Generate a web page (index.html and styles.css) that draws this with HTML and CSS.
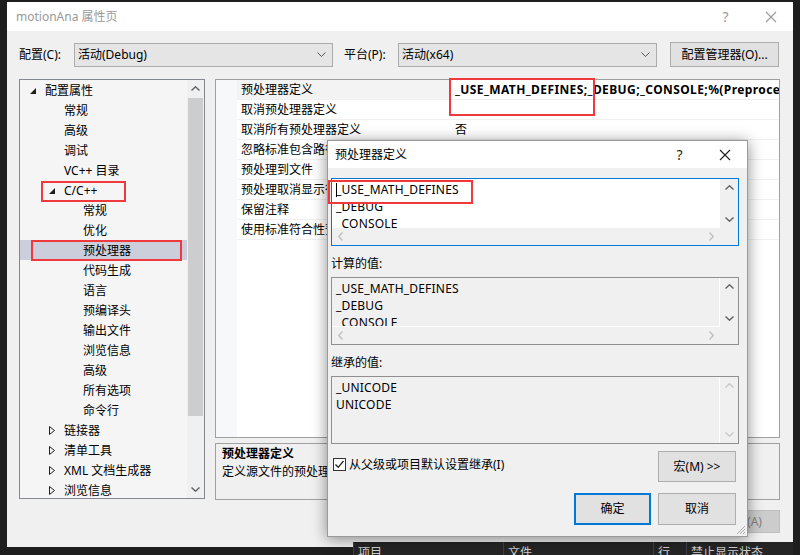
FILE: index.html
```html
<!DOCTYPE html>
<html lang="zh-CN">
  <head>
    <meta charset="UTF-8" />
    <title>motionAna 属性页</title>
    <link rel="stylesheet" href="styles.css">
  </head>
  <body>
    <div class="desk">
      <!-- 主窗口：属性页 -->
      <section class="win main">
        <div class="titlebar">
          <span class="title">motionAna 属性页</span>
          <span class="tb-btn q">?</span>
          <span class="tb-btn">
            <svg width="12" height="12" viewBox="0 0 12 12"><path d="M1 1L11 11M11 1L1 11" stroke="#9a9a9a" stroke-width="1.1"/></svg>
          </span>
        </div>
        <div class="main-body">
          <div class="cfg-row">
            <label class="lbl lbl-cfg">配置(C):</label>
            <div class="select">
              <span>活动(Debug)</span>
              <svg width="9" height="5" viewBox="0 0 9 5"><polyline points="0.5,0.5 4.5,4.5 8.5,0.5" fill="none" stroke="#555"/></svg>
            </div>
            <label class="lbl lbl-plat">平台(P):</label>
            <div class="select">
              <span>活动(x64)</span>
              <svg width="9" height="5" viewBox="0 0 9 5"><polyline points="0.5,0.5 4.5,4.5 8.5,0.5" fill="none" stroke="#555"/></svg>
            </div>
            <button class="btn btn-mgr">配置管理器(O)...</button>
          </div>

          <div class="panes">
            <div class="tree">
              <div class="tree-list">
                <div class="node lv0"><span class="arr"><svg width="6" height="6"><polygon points="6,0 6,6 0,6" fill="#1e1e1e"/></svg></span>配置属性</div>
                <div class="node lv1"><span class="arr"></span>常规</div>
                <div class="node lv1"><span class="arr"></span>高级</div>
                <div class="node lv1"><span class="arr"></span>调试</div>
                <div class="node lv1"><span class="arr"></span>VC++ 目录</div>
                <div class="node lv1 exp"><span class="arr"><svg width="6" height="6"><polygon points="6,0 6,6 0,6" fill="#1e1e1e"/></svg></span>C/C++</div>
                <div class="node lv2"><span class="arr"></span>常规</div>
                <div class="node lv2"><span class="arr"></span>优化</div>
                <div class="node lv2 sel"><span class="arr"></span>预处理器</div>
                <div class="node lv2"><span class="arr"></span>代码生成</div>
                <div class="node lv2"><span class="arr"></span>语言</div>
                <div class="node lv2"><span class="arr"></span>预编译头</div>
                <div class="node lv2"><span class="arr"></span>输出文件</div>
                <div class="node lv2"><span class="arr"></span>浏览信息</div>
                <div class="node lv2"><span class="arr"></span>高级</div>
                <div class="node lv2"><span class="arr"></span>所有选项</div>
                <div class="node lv2"><span class="arr"></span>命令行</div>
                <div class="node lv1"><span class="arr"><svg width="6" height="9"><polygon points="0.5,0.5 5.5,4.5 0.5,8.5" fill="none" stroke="#1e1e1e"/></svg></span>链接器</div>
                <div class="node lv1"><span class="arr"><svg width="6" height="9"><polygon points="0.5,0.5 5.5,4.5 0.5,8.5" fill="none" stroke="#1e1e1e"/></svg></span>清单工具</div>
                <div class="node lv1"><span class="arr"><svg width="6" height="9"><polygon points="0.5,0.5 5.5,4.5 0.5,8.5" fill="none" stroke="#1e1e1e"/></svg></span>XML 文档生成器</div>
                <div class="node lv1"><span class="arr"><svg width="6" height="9"><polygon points="0.5,0.5 5.5,4.5 0.5,8.5" fill="none" stroke="#1e1e1e"/></svg></span>浏览信息</div>
              </div>
              <div class="vscroll tree-scroll">
                <span class="sb-cell"><svg width="9" height="5"><polyline points="0.5,4.5 4.5,0.8 8.5,4.5" fill="none" stroke="#606060" stroke-width="1.4"/></svg></span>
                <span class="thumb"></span>
                <span class="sb-fill"></span>
                <span class="sb-cell"><svg width="9" height="5"><polyline points="0.5,0.5 4.5,4.2 8.5,0.5" fill="none" stroke="#606060" stroke-width="1.4"/></svg></span>
              </div>
            </div>

            <div class="right">
              <div class="grid">
                <div class="gutter"></div>
                <div class="props">
                  <div class="prop cur"><span class="pname">预处理器定义</span><span class="pval bold">_USE_MATH_DEFINES;_DEBUG;_CONSOLE;%(PreprocessorDefinitions)</span></div>
                  <div class="prop"><span class="pname">取消预处理器定义</span><span class="pval"></span></div>
                  <div class="prop"><span class="pname">取消所有预处理器定义</span><span class="pval">否</span></div>
                  <div class="prop"><span class="pname">忽略标准包含路径</span><span class="pval">否</span></div>
                  <div class="prop"><span class="pname">预处理到文件</span><span class="pval">否</span></div>
                  <div class="prop"><span class="pname">预处理取消显示行号</span><span class="pval">否</span></div>
                  <div class="prop"><span class="pname">保留注释</span><span class="pval">否</span></div>
                  <div class="prop"><span class="pname">使用标准符合性预处理器</span><span class="pval"></span></div>
                </div>
              </div>
              <div class="desc">
                <div class="bold">预处理器定义</div>
                <div>定义源文件的预处理器符号。</div>
              </div>
            </div>
          </div>

          <div class="foot">
            <button class="btn">确定</button>
            <button class="btn">取消</button>
            <button class="btn off">应用(A)</button>
          </div>
        </div>
      </section>

      <div class="status">
        <span class="col c1">项目</span>
        <span class="col c2">文件</span>
        <span class="col c3">行</span>
        <span class="col c4">禁止显示状态</span>
      </div>

      <!-- 子对话框：预处理器定义 -->
      <section class="win dlg">
        <div class="titlebar">
          <span class="title">预处理器定义</span>
          <span class="tb-btn q">?</span>
          <span class="tb-btn">
            <svg width="12" height="12" viewBox="0 0 12 12"><path d="M1 1L11 11M11 1L1 11" stroke="#1e1e1e" stroke-width="1.1"/></svg>
          </span>
        </div>
        <div class="dlg-body">
          <div class="box focus">
            <div class="text white">
              <div><span class="caret"></span>_USE_MATH_DEFINES</div>
              <div>_DEBUG</div>
              <div>_CONSOLE</div>
            </div>
            <div class="vscroll">
              <span class="sb-cell"><svg width="9" height="5"><polyline points="0.5,4.5 4.5,0.8 8.5,4.5" fill="none" stroke="#606060" stroke-width="1.4"/></svg></span>
              <span class="sb-fill"></span>
              <span class="sb-cell"><svg width="9" height="5"><polyline points="0.5,0.5 4.5,4.2 8.5,0.5" fill="none" stroke="#606060" stroke-width="1.4"/></svg></span>
            </div>
            <div class="hscroll">
              <span class="sb-cell"><svg width="5" height="9"><polyline points="4.5,0.5 0.8,4.5 4.5,8.5" fill="none" stroke="#c0c0c0" stroke-width="1.4"/></svg></span>
              <span class="sb-cell"><svg width="5" height="9"><polyline points="0.5,0.5 4.2,4.5 0.5,8.5" fill="none" stroke="#c0c0c0" stroke-width="1.4"/></svg></span>
            </div>
            <div class="corner"></div>
          </div>

          <div class="cap">计算的值:</div>
          <div class="box">
            <div class="text edged">
              <div>_USE_MATH_DEFINES</div>
              <div>_DEBUG</div>
              <div>_CONSOLE</div>
            </div>
            <div class="vscroll">
              <span class="sb-cell"><svg width="9" height="5"><polyline points="0.5,4.5 4.5,0.8 8.5,4.5" fill="none" stroke="#606060" stroke-width="1.4"/></svg></span>
              <span class="sb-fill"></span>
              <span class="sb-cell"><svg width="9" height="5"><polyline points="0.5,0.5 4.5,4.2 8.5,0.5" fill="none" stroke="#606060" stroke-width="1.4"/></svg></span>
            </div>
            <div class="hscroll">
              <span class="sb-cell"><svg width="5" height="9"><polyline points="4.5,0.5 0.8,4.5 4.5,8.5" fill="none" stroke="#c0c0c0" stroke-width="1.4"/></svg></span>
              <span class="sb-cell"><svg width="5" height="9"><polyline points="0.5,0.5 4.2,4.5 0.5,8.5" fill="none" stroke="#c0c0c0" stroke-width="1.4"/></svg></span>
            </div>
            <div class="corner"></div>
          </div>

          <div class="cap">继承的值:</div>
          <div class="box single">
            <div class="text edged-r">
              <div>_UNICODE</div>
              <div>UNICODE</div>
            </div>
            <div class="vscroll">
              <span class="sb-cell"><svg width="9" height="5"><polyline points="0.5,4.5 4.5,0.8 8.5,4.5" fill="none" stroke="#c8c8c8" stroke-width="1.4"/></svg></span>
              <span class="sb-fill"></span>
              <span class="sb-cell"><svg width="9" height="5"><polyline points="0.5,0.5 4.5,4.2 8.5,0.5" fill="none" stroke="#c8c8c8" stroke-width="1.4"/></svg></span>
            </div>
          </div>

          <div class="chk-row">
            <span class="chk"><svg width="11" height="11" viewBox="0 0 11 11"><polyline points="1.5,5.5 4.2,8.3 9.5,2" fill="none" stroke="#222" stroke-width="1.3"/></svg></span>
            <span class="chk-lbl">从父级或项目默认设置继承(I)</span>
            <button class="btn btn-big">宏(M) &gt;&gt;</button>
          </div>

          <div class="dlg-foot">
            <button class="btn btn-big ok">确定</button>
            <button class="btn btn-big">取消</button>
          </div>
        </div>
        <svg class="grip" width="11" height="11" viewBox="0 0 11 11">
          <path d="M10 2L2 10M10 5L5 10M10 8L8 10" stroke="#a8a8a8" stroke-width="1"/>
        </svg>
      </section>

      <!-- 截图上的红框标注 -->
      <span class="mark m-cpp"></span>
      <span class="mark m-pre"></span>
      <span class="mark m-val"></span>
      <span class="mark m-dlg"></span>
    </div>
  </body>
</html>
```

FILE: styles.css
```css
* {
  margin: 0;
  padding: 0;
  box-sizing: border-box;
}

html,
body {
  width: 800px;
  height: 555px;
  overflow: hidden;
  background: #1e1e1e;
  font-family: "Noto Sans", "Noto Sans CJK SC", sans-serif;
  font-size: 12px;
  line-height: 16px;
  color: #000;
}

.desk {
  position: relative;
  width: 800px;
  height: 555px;
}

.win {
  position: absolute;
  background: #f0f0f0;
  display: flex;
  flex-direction: column;
}

.main {
  left: 7px;
  top: 2px;
  width: 786px;
  height: 545px;
}

.titlebar {
  display: flex;
  align-items: center;
  height: 29px;
  padding-left: 9px;
  background: #fff;
  flex-shrink: 0;
}

.titlebar .title {
  flex: 1;
  color: #999;
}

.tb-btn {
  display: flex;
  justify-content: center;
  align-items: center;
  width: 45px;
  color: #9a9a9a;
  font-size: 14px;
}

.main-body {
  flex: 1;
  display: flex;
  flex-direction: column;
  padding: 11px 13px 0 12px;
}

.cfg-row {
  display: flex;
  align-items: center;
  height: 25px;
}

.lbl-cfg {
  width: 55px;
}

.lbl-plat {
  width: 54px;
  margin-left: 11px;
}

.select {
  display: flex;
  align-items: center;
  justify-content: space-between;
  width: 259px;
  height: 24px;
  padding: 0 6px 0 3px;
  border: 1px solid #acacac;
  background: #e5e5e5;
}

.btn {
  height: 23px;
  border: 1px solid #adadad;
  background: #e1e1e1;
  font: inherit;
  color: #000;
}

.btn-mgr {
  width: 109px;
  height: 25px;
  margin-left: 13px;
}

.panes {
  display: flex;
  gap: 10px;
  height: 421px;
  margin-top: 12px;
}

.tree {
  display: flex;
  flex-shrink: 0;
  width: 186px;
  height: 420px;
  border: 1px solid #828790;
  background: #f5f5f5;
  overflow: hidden;
}

.tree-list {
  flex: 1;
  min-width: 0;
}

.node {
  display: flex;
  align-items: center;
  height: 20px;
  padding-top: 1px;
  white-space: nowrap;
}

.node.sel {
  background: #cccedb;
}

.lv0 {
  padding-left: 8px;
}

.lv1 {
  padding-left: 27px;
}

.lv2 {
  padding-left: 46px;
}

.arr {
  display: flex;
  align-items: center;
  width: 17px;
  padding-left: 2px;
}

.vscroll {
  display: flex;
  flex-direction: column;
  width: 18px;
  background: #f0f0f0;
}

.tree-scroll {
  width: 17px;
  flex-shrink: 0;
}

.sb-cell {
  display: flex;
  align-items: center;
  justify-content: center;
  height: 17px;
  flex-shrink: 0;
}

.thumb {
  height: 318px;
  margin: 1px 0 0 1px;
  width: 15px;
  background: #cdcdcd;
}

.sb-fill {
  flex: 1;
}

.right {
  flex: 1;
  min-width: 0;
  display: flex;
  flex-direction: column;
  gap: 5px;
}

.grid {
  display: flex;
  height: 359px;
  border: 1px solid #a0a0a0;
  background: #fff;
  overflow: hidden;
}

.gutter {
  width: 21px;
  flex-shrink: 0;
  background: #f7f8fa;
}

.props {
  flex: 1;
  min-width: 0;
  overflow: hidden;
}

.prop {
  display: flex;
  height: 20px;
  border-bottom: 1px solid #f0f0f0;
}

.pname {
  flex-shrink: 0;
  width: 213px;
  height: 100%;
  padding: 2px 0 0 4px;
  white-space: nowrap;
  overflow: hidden;
}

.prop.cur .pname {
  background: #f3f3f3;
}

.pval {
  flex: 1;
  min-width: 0;
  height: 100%;
  padding: 2px 0 0 5px;
  white-space: nowrap;
  overflow: hidden;
}

.pval.bold {
  letter-spacing: 0.4px;
}

.bold {
  font-weight: bold;
}

.desc {
  height: 57px;
  padding: 1px 6px;
  border: 1px solid #a0a0a0;
  line-height: 18px;
  white-space: nowrap;
  overflow: hidden;
}

.foot {
  display: flex;
  justify-content: flex-end;
  gap: 6px;
  margin-top: 10px;
}

.foot .btn {
  width: 75px;
}

.btn.off {
  background: #cccccc;
  border-color: #bfbfbf;
  color: #838383;
}

.status {
  position: absolute;
  left: 353px;
  top: 542px;
  width: 440px;
  height: 13px;
  display: flex;
  background: #252526;
  color: #d0d0d0;
  overflow: hidden;
}

.col {
  padding: 3px 0 0 4px;
  line-height: 16px;
  border-left: 1px solid #3f3f46;
}

.c1 {
  width: 150px;
}

.c2 {
  width: 150px;
}

.c3 {
  width: 33px;
}

.c4 {
  flex: 1;
}

.dlg {
  left: 327px;
  top: 140px;
  width: 421px;
  height: 397px;
  border: 1px solid #9a9a9a;
  box-shadow: 0 2px 14px rgba(0, 0, 0, 0.45);
  z-index: 5;
}

.dlg .titlebar {
  height: 27px;
  padding-left: 7px;
}

.dlg .titlebar .title {
  color: #000;
}

.dlg .tb-btn {
  color: #1e1e1e;
}

.dlg-body {
  padding: 10px 8px 0 3px;
}

.box {
  display: grid;
  grid-template-columns: 1fr 18px;
  grid-template-rows: 1fr 17px;
  height: 68px;
  border: 1px solid #8f8f8f;
}

.box.focus {
  border-color: #0078d7;
}

.box.single {
  grid-template-rows: 1fr;
}

.text {
  padding: 2px 0 0 4px;
  line-height: 17px;
  letter-spacing: 0.2px;
  overflow: hidden;
  white-space: nowrap;
}

.text.white {
  background: #fff;
}

.text.edged {
  border-right: 1px solid #fff;
  border-bottom: 1px solid #fff;
}

.text.edged-r {
  border-right: 1px solid #fff;
}

.caret {
  display: inline-block;
  width: 1px;
  height: 14px;
  margin-right: -1px;
  vertical-align: -3px;
  background: #000;
}

.hscroll {
  display: flex;
  justify-content: space-between;
  background: #f0f0f0;
}

.hscroll .sb-cell {
  width: 17px;
}

.corner {
  background: #f0f0f0;
}

.cap {
  margin: 10px 0 5px;
}

.box.single + .chk-row {
  margin-top: 7px;
}

.chk-row {
  display: flex;
  align-items: center;
  height: 31px;
  padding-right: 3px;
}

.chk {
  display: flex;
  align-items: center;
  justify-content: center;
  width: 13px;
  height: 13px;
  margin: -4px 0 0 2px;
  border: 1px solid #333;
  background: #fff;
}

.chk-lbl {
  flex: 1;
  margin: -4px 0 0 3px;
}

.btn-big {
  width: 78px;
  height: 31px;
}

.dlg-foot {
  display: flex;
  justify-content: flex-end;
  gap: 7px;
  margin-top: 11px;
  padding-right: 3px;
}

.dlg-foot .btn-big {
  height: 32px;
}

.btn.ok {
  width: 77px;
  border: 2px solid #0078d7;
}

.grip {
  position: absolute;
  right: 1px;
  bottom: 1px;
}

.mark {
  position: absolute;
  border: 2px solid #f0393c;
  z-index: 10;
}

.m-cpp {
  left: 41px;
  top: 181px;
  width: 85px;
  height: 21px;
}

.m-pre {
  left: 31px;
  top: 240px;
  width: 151px;
  height: 21px;
}

.m-val {
  left: 449px;
  top: 78px;
  width: 146px;
  height: 38px;
}

.m-dlg {
  left: 328px;
  top: 180px;
  width: 145px;
  height: 24px;
}
```
